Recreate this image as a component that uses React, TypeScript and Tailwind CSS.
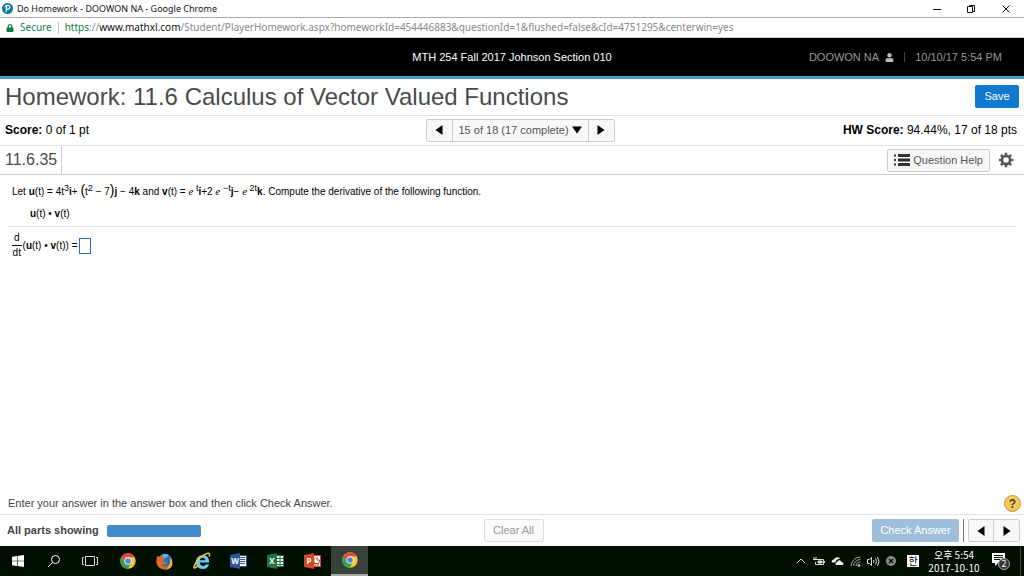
import type { ReactNode } from 'react'
import { FaLock, FaUser } from 'react-icons/fa'
import clsx from 'clsx'

const ChromeIcon = () => (
  <svg viewBox="0 0 48 48" className="size-4">
    <circle cx="24" cy="24" r="23" fill="#f7c832" />
    <path d="M4 12.500A23 23 0 0 1 44 12.500L24 13.500 14 30Z" fill="#dd4b3e" />
    <path d="M4 12.500A23 23 0 0 0 23 47L33.500 29.500 14.500 30Z" fill="#2ba24c" />
    <circle cx="24" cy="24" r="11" fill="#fff" />
    <circle cx="24" cy="24" r="8.500" fill="#4a86e8" />
  </svg>
)

const FirefoxIcon = () => (
  <svg viewBox="0 0 48 48" className="size-[17px]">
    <circle cx="25" cy="22" r="20" fill="#2b72b8" />
    <path d="M17 5C24 1 34 3 38 9c-5-1-8 1-9 5-5 2-8-1-12-3Z" fill="#5fb5e4" />
    <path
      d="M4 8c2 2 4 3 7 3 3-3 6-4 9-4-2 3-2 5-1 7l6 2c0 3-3 4-6 6-1 3 1 4 4 4 4 0 6 1 6 3-5 6-13 4-16-1 1 8 9 12 17 10 9-2 14-11 10-23 5 4 8 12 6 19C43 45 32 48 24 47 10 46 1 36 1 24 1 18 2 12 4 8Z"
      fill="#e66b21"
    />
    <path d="M40 12c5 6 7 12 5 20-2 8-8 13-15 14 8-7 12-19 10-34Z" fill="#fbc02d" />
  </svg>
)

const IeIcon = () => (
  <svg viewBox="0 0 48 48" className="size-[18px]">
    <path
      d="M43 28H18c0 6 4 9 9 9 4 0 6-2 7-4h9c-3 8-9 12-17 12C15 45 8 37 8 27 8 16 16 8 26 8c11 0 18 8 17 20ZM18 22h15c0-4-3-7-7-7-5 0-8 3-8 7Z"
      fill="#6fcdf5"
    />
    <path
      d="M13 37C6 43 1 45 3 38 7 25 23 8 37 4c7-2 9 2 6 8"
      fill="none"
      stroke="#f8c52c"
      strokeWidth="4"
    />
  </svg>
)

const OfficeIcon = ({
  letter,
  box,
  line,
  children,
}: {
  letter: string
  box: string
  line: string
  children: ReactNode
}) => (
  <svg viewBox="0 0 17 16" className="h-4 w-[17px]">
    <path d="M9 2.500h7.500v11H9z" fill="#fff" className={line} stroke="currentColor" />
    <g className={line} stroke="currentColor" fill="none">
      {children}
    </g>
    <path d="M0 2 10 0v16L0 14Z" className={box} />
    <text
      x="5"
      y="11"
      textAnchor="middle"
      fill="#fff"
      className="font-['Open_Sans',sans-serif] text-[8px] font-bold"
    >
      {letter}
    </text>
  </svg>
)

const WordIcon = () => (
  <OfficeIcon letter="W" box="fill-[#2b579a]" line="text-[#2b579a]">
    <path d="M10 4.500h5M10 6.500h5M10 8.500h5M10 10.500h5" />
  </OfficeIcon>
)

const ExcelIcon = () => (
  <OfficeIcon letter="X" box="fill-[#217346]" line="text-[#217346]">
    <path d="M10 5.500h6M10 8.500h6M10 11.500h6M13 2v12" />
  </OfficeIcon>
)

const PowerPointIcon = () => (
  <OfficeIcon letter="P" box="fill-[#d24726]" line="text-[#d24726]">
    <path d="M13 4v3h2.500a3 3 0 1 1-4-2M10 10.500h5M10 12h5" />
  </OfficeIcon>
)

const WindowsIcon = () => (
  <svg viewBox="0 0 12 12" className="size-3" fill="#fff">
    <path d="M0 1.700 5 1v4.700H0ZM5.600.900 12 0v5.700H5.600ZM0 6.300h5V11l-5-.700ZM5.600 6.300H12V12l-6.400-.900Z" />
  </svg>
)

const SearchIcon = () => (
  <svg viewBox="0 0 14 14" className="size-3.5" fill="none" stroke="#fff">
    <circle cx="8.500" cy="5.500" r="4" />
    <path d="m5.500 8.500-4.500 4.500" />
  </svg>
)

const TaskViewIcon = () => (
  <svg viewBox="0 0 16 12" className="h-3 w-4" fill="none" stroke="#ddd">
    <path d="M3.500 1.500h9v9h-9zM2 2.500H.500v7H2M14 2.500h1.500v7H14" />
  </svg>
)

const ListIcon = () => (
  <svg viewBox="0 0 16 12" className="h-3 w-4" fill="#333">
    <path d="M4 0h12v3H4zM4 4.500h12v3H4zM4 9h12v3H4z" />
    <path d="M0 .500h2v2H0zM0 5h2v2H0zM0 9.500h2v2H0z" />
  </svg>
)

const GearIcon = () => (
  <svg viewBox="-8 -8 16 16" className="size-4" fill="none" stroke="#555">
    <circle r="4" strokeWidth="2.500" />
    <path
      d="M0-4.500V-7.200M0 4.500V7.200M-4.500 0H-7.200M4.500 0H7.200M3.200-3.200 5.100-5.100M-3.200 3.200-5.100 5.100M3.200 3.200 5.100 5.100M-3.200-3.200-5.100-5.100"
      strokeWidth="2.600"
    />
  </svg>
)

const Triangle = ({ dir }: { dir: 'left' | 'right' | 'down' }) => (
  <svg
    viewBox="0 0 10 10"
    className={clsx('size-2.5', dir === 'left' && 'rotate-180', dir === 'down' && 'rotate-90')}
  >
    <path d="M1.500 0 8.500 5 1.500 10Z" />
  </svg>
)

const TitleBar = () => (
  <div className="flex h-[18px] items-center border-b border-[#a9a9a9] pl-0.5 font-['Noto_Sans','Noto_Sans_CJK_KR',sans-serif] text-[9px] text-[#111]">
    <svg viewBox="0 0 12 12" className="mr-1 size-[11px]">
      <circle cx="6" cy="6" r="6" fill="#0b7a9b" />
      <path
        d="M4.500 10 5 3.500M3.300 4.500C4 2 8.500 1.800 8.500 4.300S6.500 7 5.500 6.500"
        fill="none"
        stroke="#fff"
        strokeWidth="1.300"
      />
    </svg>
    <span className="grow">Do Homework - DOOWON NA - Google Chrome</span>
    <button aria-label="Minimize" className="flex w-[34px] justify-center">
      <svg viewBox="0 0 10 10" className="size-2.5" stroke="#111">
        <path d="M1 5.500h8" />
      </svg>
    </button>
    <button aria-label="Restore" className="flex w-[34px] justify-center">
      <svg viewBox="0 0 10 10" className="size-2.5" fill="none" stroke="#111">
        <path d="M1.500 2.500h5v6h-5zM3.500 2V1.500h5v6H7" />
      </svg>
    </button>
    <button aria-label="Close" className="flex w-[36px] justify-center">
      <svg viewBox="0 0 10 10" className="size-2.5" stroke="#111">
        <path d="m1.500 1.500 7 7m0-7-7 7" />
      </svg>
    </button>
  </div>
)

const AddressBar = () => (
  <div className="flex h-5 items-center border-b border-[#ccc] pl-1.5 font-['Noto_Sans','Noto_Sans_CJK_KR',sans-serif] text-[10px] text-[#888]">
    <FaLock className="mr-1.5 size-2 text-[#0b8043]" />
    <span className="text-[#0b8043]">Secure</span>
    <span className="mx-1.5 h-3 w-px bg-[#bbb]" />
    <span className="whitespace-nowrap">
      <span className="text-[#0b8043]">https</span>://
      <span className="text-[#111]">www.mathxl.com</span>
      /Student/PlayerHomework.aspx?homeworkId=454446883&amp;questionId=1&amp;flushed=false&amp;cId=4751295&amp;centerwin=yes
    </span>
  </div>
)

const CourseHeader = () => (
  <header className="grid h-[41px] grid-cols-[1fr_auto_1fr] items-center border-b-3 border-[#45a0c6] bg-black text-[11px]">
    <span className="col-start-2 text-white">MTH 254 Fall 2017 Johnson Section 010</span>
    <div className="flex items-center justify-end pr-[22px] text-[#999]">
      <span>DOOWON NA</span>
      <FaUser className="ml-1.5 size-[9px] text-[#bbb]" />
      <span className="mx-2.5 h-2.5 w-px bg-[#444]" />
      <span>10/10/17 5:54 PM</span>
    </div>
  </header>
)

const QuestionNav = () => (
  <div className="ml-[18px] flex h-[23px] rounded-xs border border-[#ccc] bg-[#f7f7f7] text-[11px] text-[#555]">
    <button aria-label="Previous question" className="flex w-[25px] items-center justify-center">
      <Triangle dir="left" />
    </button>
    <div className="relative flex border-x border-[#ccc]">
      <select aria-label="Question" className="w-[135px] appearance-none pl-1.5">
        <option>15 of 18 (17 complete)</option>
      </select>
      <span className="pointer-events-none absolute inset-y-0 right-1.5 flex items-center text-black">
        <Triangle dir="down" />
      </span>
    </div>
    <button aria-label="Next question" className="flex w-[25px] items-center justify-center">
      <Triangle dir="right" />
    </button>
  </div>
)

const E = () => <i className="font-['Liberation_Serif',serif] text-[11px]">e</i>

const Sup = ({ children }: { children: ReactNode }) => (
  <sup className="text-[9px]">{children}</sup>
)

const Problem = () => (
  <section className="grow px-2 text-[10px] text-black">
    <div className="border-b border-[#dfe2ea] pt-[7px] pb-[3px] pl-1">
      <p className="h-[18px] leading-[18px] whitespace-nowrap">
        Let <b>u</b>(t) = 4t<Sup>3</Sup>
        <b>i</b>+ <span className="text-sm leading-none">(</span>t<Sup>2</Sup> − 7
        <span className="text-sm leading-none">)</span>
        <b>j</b> − 4<b>k</b> and <b>v</b>(t) = <E />
        <Sup> t</Sup>
        <b>i</b>+2 <E /> <Sup>−t</Sup>
        <b>j</b>− <E />
        <Sup> 2t</Sup>
        <b>k</b>. Compute the derivative of the following function.
      </p>
      <p className="mt-[5px] pl-[18px] leading-[18px]">
        <b>u</b>(t) • <b>v</b>(t)
      </p>
    </div>
    <div className="flex items-center pt-1 pl-1">
      <span className="flex flex-col text-center leading-[14px]">
        <span className="border-b border-black px-0.5">d</span>
        <span>dt</span>
      </span>
      <label htmlFor="answer" className="ml-px whitespace-nowrap">
        (<b>u</b>(t) • <b>v</b>(t)) =
      </label>
      <input id="answer" className="ml-0.5 h-4 w-3 border border-[#3366cc]" />
    </div>
  </section>
)

const apps = [
  { name: 'Google Chrome', icon: <ChromeIcon /> },
  { name: 'Firefox', icon: <FirefoxIcon /> },
  { name: 'Internet Explorer', icon: <IeIcon /> },
  { name: 'Word', icon: <WordIcon /> },
  { name: 'Excel', icon: <ExcelIcon /> },
  { name: 'PowerPoint', icon: <PowerPointIcon /> },
  { name: 'Homework window', icon: <ChromeIcon />, active: true },
]

const Tray = () => (
  <div className="grid auto-cols-[18px] grid-flow-col place-items-center">
    <svg viewBox="0 0 10 10" className="size-2.5" fill="none" stroke="#ddd">
      <path d="m1 7 4-4 4 4" />
    </svg>
    <svg viewBox="0 0 12 10" className="h-2.5 w-3" fill="none" stroke="#ddd">
      <path d="M3.500 3.500h7v5h-8V6M11.500 5v2M1 1v2M3 1v2M0 3.500h4" />
      <path d="M5 5h4v2H5z" fill="#ddd" />
    </svg>
    <svg viewBox="0 0 13 10" className="h-2.5 w-[13px]" fill="#eee">
      <path d="M1 6.500C0 5 1 3.500 3 3.500 4 .500 8 .500 9 3 6.500 2.500 5 4 4.500 6.500ZM5.500 9C4 9 4 6.500 6 6.500 6.500 3.500 10 3.500 10.500 6 13 6 13 9 11.500 9Z" />
    </svg>
    <svg viewBox="0 0 11 11" className="size-[11px]" fill="none" stroke="#aaa">
      <path d="M1 10A9.500 9.500 0 0 1 10.500 1M3.500 10A7 7 0 0 1 10.500 3.500M6 10a4.500 4.500 0 0 1 4.500-4" />
      <circle cx="9" cy="9.500" r="1" fill="#fff" />
    </svg>
    <svg viewBox="0 0 13 11" className="h-[11px] w-[13px]" fill="none" stroke="#ddd">
      <path d="M.500 3.500h2l2-2v8l-2-2h-2zM6.500 4q1 1.500 0 3M8.500 2.500q2 3 0 6M10.500 1q3 4.500 0 9" />
    </svg>
    <svg viewBox="0 0 10 10" className="size-2.5">
      <circle cx="5" cy="5" r="5" fill="#888" />
      <path d="m3 3 4 4m0-4L3 7" stroke="#010e02" strokeWidth="1.300" />
    </svg>
    <span className="ml-2 flex size-3 items-center justify-center bg-white text-[10px] leading-none text-black">
      한
    </span>
  </div>
)

const Taskbar = () => (
  <footer className="flex h-[30px] shrink-0 items-center bg-[#010e02] font-['Noto_Sans_CJK_KR',sans-serif] text-[10px] text-white">
    <button aria-label="Start" className="flex w-9 justify-center">
      <WindowsIcon />
    </button>
    <button aria-label="Search" className="flex w-9 justify-center">
      <SearchIcon />
    </button>
    <button aria-label="Task view" className="flex w-9 justify-center">
      <TaskViewIcon />
    </button>
    <div className="flex grow self-stretch pl-px">
      {apps.map(({ name, icon, active }) => (
        <button
          key={name}
          aria-label={name}
          className={clsx(
            'flex w-[37px] items-center justify-center',
            active && 'border-b-2 border-[#aaa] bg-[#39423a]',
          )}
        >
          {icon}
        </button>
      ))}
    </div>
    <Tray />
    <div className="ml-1.5 w-[60px] text-center leading-[13px] whitespace-nowrap">
      <p>오후 5:54</p>
      <p>2017-10-10</p>
    </div>
    <button aria-label="Notifications" className="mr-2.5 ml-2 flex">
      <svg viewBox="0 0 18 18" className="size-[18px]">
        <path d="M0 1h13v10H6l-3 3v-3H0Z" fill="#fff" />
        <path d="M2 3.500h9M2 5.500h9M2 7.500h6" stroke="#010e02" />
        <circle cx="12" cy="12" r="5.500" fill="#333" stroke="#aaa" />
        <text x="12" y="15" textAnchor="middle" fill="#fff" className="text-[9px]">
          2
        </text>
      </svg>
    </button>
    <span className="mr-[3px] h-full w-px bg-[#444]" />
  </footer>
)

const App = () => {
  return (
    <div className="flex min-h-screen flex-col bg-white font-['Liberation_Sans','Noto_Sans_CJK_KR',sans-serif]">
      <TitleBar />
      <AddressBar />
      <CourseHeader />

      <main className="flex grow flex-col">
        <div className="flex h-[37px] items-center justify-between border-b border-[#dfe2ea] pr-[5px] pb-px pl-[5px]">
          <h1 className="text-2xl text-[#4a4a4a]">
            Homework: 11.6 Calculus of Vector Valued Functions
          </h1>
          <button className="h-[23px] w-11 rounded-xs bg-[#0f79cf] text-[11px] text-white">
            Save
          </button>
        </div>

        <div className="grid h-[30px] grid-cols-[1fr_auto_1fr] items-center border-b border-[#dfe2ea] pr-[7px] pb-px pl-[5px] text-xs">
          <p>
            <b>Score:</b> 0 of 1 pt
          </p>
          <QuestionNav />
          <p className="text-right">
            <b>HW Score:</b> 94.44%, 17 of 18 pts
          </p>
        </div>

        <div className="flex h-[29px] items-center border-b border-[#c9ced6] pr-2.5 pl-[5px]">
          <h2 className="flex h-full items-center border-r border-[#c9ced6] pr-1 text-base text-[#4a4a4a]">
            11.6.35
          </h2>
          <button className="ml-auto flex h-[23px] items-center gap-[3px] rounded-xs border border-[#ccc] bg-[#f7f7f7] px-1.5 text-[11px] text-[#555]">
            <ListIcon />
            Question Help
          </button>
          <button aria-label="Settings" className="ml-2">
            <GearIcon />
          </button>
        </div>

        <Problem />

        <div className="flex items-center justify-between border-b border-[#dfe2ea] pr-[3px] pb-0.5 pl-2 text-[11px] text-[#444]">
          <p>Enter your answer in the answer box and then click Check Answer.</p>
          <button
            aria-label="Help"
            className="size-[17px] rounded-full border border-[#b99545] bg-[#f7c957] text-xs leading-none font-bold"
          >
            ?
          </button>
        </div>

        <div className="grid h-[31px] grid-cols-[1fr_auto_1fr] items-center pr-1 pl-[7px] text-[11px]">
          <div className="flex items-center gap-2">
            <b className="text-[#444]">All parts showing</b>
            <span className="h-3 w-[94px] rounded-xs bg-[#418bca]" />
          </div>
          <button className="h-[23px] w-[60px] rounded-xs border border-[#ddd] bg-[#fafafa] text-[#999]">
            Clear All
          </button>
          <div className="flex items-center justify-end">
            <button className="h-[23px] w-[87px] rounded-xs bg-[#9dbfdb] text-white">
              Check Answer
            </button>
            <span className="mx-1 h-[23px] w-px bg-[#777]" />
            <div className="flex h-[23px] rounded-xs border border-[#ccc] bg-[#f7f7f7]">
              <button
                aria-label="Previous part"
                className="flex w-[25px] items-center justify-center border-r border-[#ccc]"
              >
                <Triangle dir="left" />
              </button>
              <button aria-label="Next part" className="flex w-[25px] items-center justify-center">
                <Triangle dir="right" />
              </button>
            </div>
          </div>
        </div>
      </main>

      <Taskbar />
    </div>
  )
}

export default App
